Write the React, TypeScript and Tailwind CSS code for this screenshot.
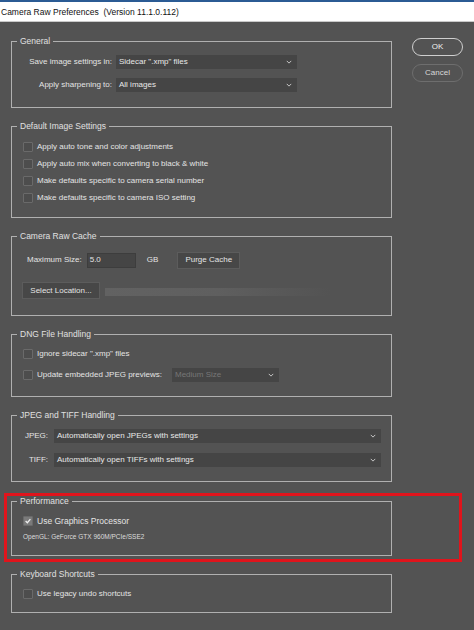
import React from 'react';

function Chevron() {
  return (
    <svg viewBox="0 0 8 5" className="w-[6px] h-[4px] text-[#c8c8c8]">
      <path d="M1 1 L4 4 L7 1" fill="none" stroke="currentColor" strokeWidth="1.3" />
    </svg>
  );
}

function Select({ value, className, disabled }: { value: string; className: string; disabled?: boolean }) {
  return (
    <div className={`${className} h-[14px] bg-[#454545] flex items-center justify-between pl-[3px] pr-[5px]`}>
      <span className={disabled ? 'text-[#777]' : 'text-[#e8e8e8]'}>{value}</span>
      <Chevron />
    </div>
  );
}

function Checkbox({ checked }: { checked?: boolean }) {
  return (
    <div
      className={`w-[10px] h-[10px] shrink-0 rounded-[1px] border border-[#6a6a6a] flex items-center justify-center ${
        checked ? 'bg-[#7a7a7a]' : 'bg-[#4d4d4d]'
      }`}
    >
      {checked && (
        <svg viewBox="0 0 10 10" className="w-[8px] h-[8px]">
          <path d="M2 5 L4.2 7.2 L8 2.6" fill="none" stroke="#eeeeee" strokeWidth="1.6" />
        </svg>
      )}
    </div>
  );
}

function CheckRow({ label, checked, className = '' }: { label: string; checked?: boolean; className?: string }) {
  return (
    <div className={`flex items-center gap-[4px] pl-[11px] ${className}`}>
      <Checkbox checked={checked} />
      <span className="text-[#e4e4e4]">{label}</span>
    </div>
  );
}

function Group({ title, className, children }: { title: string; className: string; children: React.ReactNode }) {
  return (
    <fieldset className={`border border-[#b0b0b0] ${className}`}>
      <legend className="ml-[5px] px-[3px] leading-[10px] text-[8.5px] text-[#e0e0e0]">{title}</legend>
      {children}
    </fieldset>
  );
}

export default function App() {
  return (
    <div className="w-[474px] h-[630px] bg-[#535353] flex flex-col text-[8px] overflow-hidden" style={{ fontFamily: '"Liberation Sans", Arial, sans-serif' }}>
      {/* title bar */}
      <div className="h-[22px] bg-white border-t-[2px] border-[#2b5b94] border-b border-b-[#c9c9c9] flex items-center pl-[1px] pt-[2px] text-[8.5px] text-[#111]">
        Camera Raw Preferences&nbsp;&nbsp;(Version 11.1.0.112)
      </div>

      <div className="flex pt-[14px] pl-[11px]">
        <div className="w-[381px] flex flex-col gap-[13px]">
          <Group title="General" className="h-[72px]">
            <div className="flex flex-col gap-[9px] pt-[9px]">
              <div className="flex items-center">
                <span className="w-[100px] text-right text-[#e4e4e4]">Save image settings in:</span>
                <Select value={'Sidecar ".xmp" files'} className="ml-[4px] w-[181px]" />
              </div>
              <div className="flex items-center">
                <span className="w-[100px] text-right text-[#e4e4e4]">Apply sharpening to:</span>
                <Select value="All images" className="ml-[4px] w-[181px]" />
              </div>
            </div>
          </Group>

          <Group title="Default Image Settings" className="h-[97px]">
            <div className="flex flex-col pt-[7px]">
              <CheckRow className="h-[17px]" label="Apply auto tone and color adjustments" />
              <CheckRow className="h-[17px]" label="Apply auto mix when converting to black & white" />
              <CheckRow className="h-[17px]" label="Make defaults specific to camera serial number" />
              <CheckRow className="h-[17px]" label="Make defaults specific to camera ISO setting" />
            </div>
          </Group>

          <Group title="Camera Raw Cache" className="h-[85px]">
            <div className="flex flex-col pt-[10px] gap-[13px]">
              <div className="flex items-center h-[18px] pl-[15px] text-[#e4e4e4]">
                <span>Maximum Size:</span>
                <div className="ml-[5px] w-[49px] h-[15px] bg-[#454545] border border-[#3d3d3d] flex items-center pl-[2px]">5.0</div>
                <span className="ml-[11px]">GB</span>
                <div className="ml-[19px] w-[63px] h-[17px] bg-[#474747] border border-[#5c5c5c] flex items-center justify-center">Purge Cache</div>
              </div>
              <div className="flex items-center h-[17px] pl-[10px] text-[#e4e4e4]">
                <div className="w-[78px] h-[17px] bg-[#474747] border border-[#5c5c5c] flex items-center justify-center">Select Location...</div>
                <div className="ml-[5px] mt-[3px] w-[225px] h-[8px] bg-gradient-to-r from-[#626262] via-[#5f5f5f] to-[#535353]" />
              </div>
            </div>
          </Group>

          <Group title="DNG File Handling" className="h-[68px]">
            <div className="flex flex-col pt-[8px] gap-[7px]">
              <CheckRow className="h-[14px]" label={'Ignore sidecar ".xmp" files'} />
              <div className="flex items-center h-[14px]">
                <CheckRow label="Update embedded JPEG previews:" />
                <Select value="Medium Size" disabled className="ml-[10px] w-[107px] h-[13px] bg-[#4a4a4a]" />
              </div>
            </div>
          </Group>

          <Group title="JPEG and TIFF Handling" className="h-[72px]">
            <div className="flex flex-col pt-[9px] gap-[10px]">
              <div className="flex items-center">
                <span className="w-[36px] text-right text-[#e4e4e4]">JPEG:</span>
                <Select value="Automatically open JPEGs with settings" className="ml-[6px] w-[327px]" />
              </div>
              <div className="flex items-center">
                <span className="w-[36px] text-right text-[#e4e4e4]">TIFF:</span>
                <Select value="Automatically open TIFFs with settings" className="ml-[6px] w-[327px]" />
              </div>
            </div>
          </Group>

          <div className="relative mt-[1px]">
            <Group title="Performance" className="h-[60px]">
              <div className="flex flex-col pt-[9px] gap-[5px]">
                <CheckRow className="h-[12px] text-[8.5px]" checked label="Use Graphics Processor" />
                <div className="h-[10px] pl-[11px] flex items-center text-[6.5px] text-[#dcdcdc]">OpenGL: GeForce GTX 960M/PCIe/SSE2</div>
              </div>
            </Group>
            <div className="absolute left-[-7px] right-[-70px] top-[-3px] bottom-[-6px] border-[3px] border-[#e0141c] pointer-events-none" />
          </div>

          <Group title="Keyboard Shortcuts" className="h-[44px]">
            <div className="pt-[9px]">
              <CheckRow className="h-[12px]" label="Use legacy undo shortcuts" />
            </div>
          </Group>
        </div>

        <div className="ml-[20px] pt-[2px] flex flex-col gap-[8px]">
          <div className="w-[51px] h-[18px] rounded-full border-[1.5px] border-[#cfcfcf] flex items-center justify-center text-[#f0f0f0]">OK</div>
          <div className="w-[51px] h-[18px] rounded-full border border-[#6e6e6e] flex items-center justify-center text-[#d8d8d8]">Cancel</div>
        </div>
      </div>
    </div>
  );
}
